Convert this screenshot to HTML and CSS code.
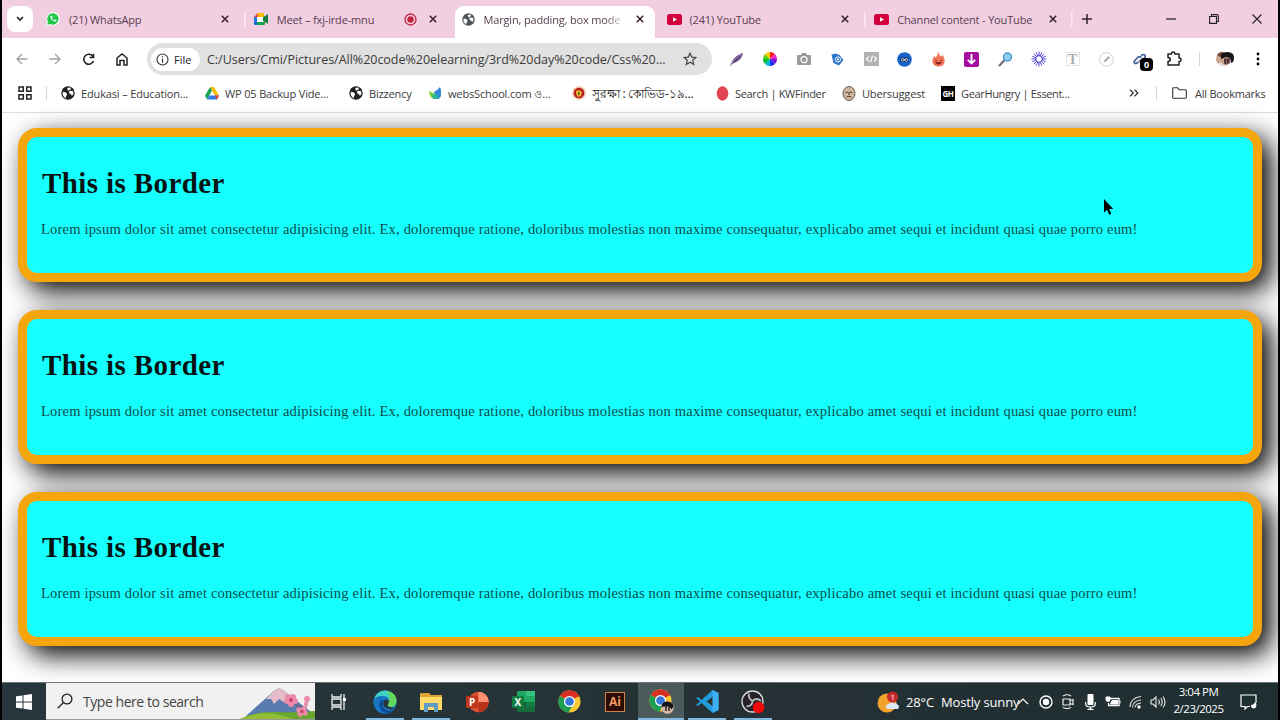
FILE: index.html
```
<!DOCTYPE html>
<html lang="en">
<head>
  <meta charset="UTF-8">
  <title>Margin, padding, box model</title>
  <link rel="stylesheet" href="styles.css">
</head>
<body>

<!-- Shared icons -->
<svg class="defs" width="0" height="0">
  <symbol id="close" viewBox="0 0 8 8"><path d="M.8 .8l6.400 6.400M7.200 .8L.8 7.200" stroke="#3a2433" stroke-width="1.600"/></symbol>
  <symbol id="globe" viewBox="0 0 14 14"><circle cx="7" cy="7" r="6.700" fill="currentColor"/><path d="M1.800 5.800q3 0 4 1.700t-.8 2.500l-.3 2.200Q1 10.500 1.800 5.800zM6 2.800q2-2 4-.8l-1 2-2 .5zM8 5.500q2-1.500 4.300 0 .7 3-1.300 4.500-.5-2-2-2.300-1.500-.7-1-2.200z" fill="#fff"/></symbol>
  <symbol id="youtube" viewBox="0 0 15 11"><rect width="15" height="11" rx="2.500" fill="#d2003c"/><path d="M6 3.200v4.600l4-2.300z" fill="#fff"/></symbol>
  <symbol id="chrome" viewBox="0 0 24 24"><circle cx="12" cy="12" r="11.500" fill="#fcc934"/><path d="M12 12L2 6.200A11.500 11.500 0 0 1 22 6.300z" fill="#d93025"/><path d="M12 6.300h10" stroke="#d93025" stroke-width="1"/><path d="M2 6.200A11.500 11.500 0 0 0 11 23.500l5.500-9.300L12 12z" fill="#1e9e50"/><circle cx="12" cy="12" r="5.800" fill="#fff"/><circle cx="12" cy="12" r="4.500" fill="#3577dc"/></symbol>
</svg>

<div class="browser">
  <div class="tabs">
    <div class="tab-search"><svg width="8" height="6" viewBox="0 0 8 6"><path d="M1 1l3 3 3-3" fill="none" stroke="#222" stroke-width="1.700"/></svg></div>
    <div class="tab">
      <span class="fav"><svg width="14" height="14" viewBox="0 0 14 14"><path d="M0 14l1-4A6.800 6.800 0 1 1 4 13z" fill="#fff"/><path d="M1.200 12.800l.8-3A5.700 5.700 0 1 1 4.300 12z" fill="#22c64a"/><path d="M4.500 4c-.8 2.200 2.700 5.800 5.200 5.500.9-.1 1-1 .8-1.400L9 7.400l-.9.800C7.200 7.900 6.300 7 6 6.200l.6-.8L6 3.800c-.5-.3-1.100-.2-1.500.2z" fill="#fff"/></svg></span>
      <span class="tab-title t1">(21) WhatsApp</span>
      <svg class="x" width="8" height="8"><use href="#close"/></svg>
    </div>
    <div class="tab line">
      <span class="fav"><svg width="14" height="12" viewBox="0 0 14 12"><path d="M0 4l4-4v4z" fill="#e94335"/><path d="M4 0h6v4H4z" fill="#fbbc04"/><path d="M0 4h3v5H0z" fill="#2675e8"/><path d="M0 9h3v3H1.500Q0 12 0 10.500z" fill="#1967d2"/><path d="M3 9h8v2q0 1-1 1H3z" fill="#18a44c"/><path d="M3 4h6v5H3z" fill="#fff"/><path d="M9 4l2-1 3-2v10l-3-2-2-1z" fill="#13803b"/></svg></span>
      <span class="tab-title t2">Meet – fxj-irde-mnu</span>
      <svg class="rec" width="13" height="13" viewBox="0 0 13 13"><circle cx="6.500" cy="6.500" r="5.500" fill="none" stroke="#c0223f" stroke-width="1.300"/><circle cx="6.500" cy="6.500" r="3.200" fill="#c0223f"/></svg>
      <svg class="x" width="8" height="8"><use href="#close"/></svg>
    </div>
    <div class="tab active">
      <span class="fav globe"><svg width="13" height="13"><use href="#globe"/></svg></span>
      <span class="tab-title t3">Margin, padding, box mode</span>
      <svg class="x" width="8" height="8"><use href="#close"/></svg>
    </div>
    <div class="tab">
      <span class="fav"><svg width="15" height="11"><use href="#youtube"/></svg></span>
      <span class="tab-title t4">(241) YouTube</span>
      <svg class="x" width="8" height="8"><use href="#close"/></svg>
    </div>
    <div class="tab line">
      <span class="fav"><svg width="15" height="11"><use href="#youtube"/></svg></span>
      <span class="tab-title t5">Channel content - YouTube</span>
      <svg class="x" width="8" height="8"><use href="#close"/></svg>
    </div>
    <div class="new-tab line"><svg width="10" height="10" viewBox="0 0 10 10"><path d="M5 0v10M0 5h10" stroke="#33202d" stroke-width="1.500"/></svg></div>
    <div class="win-buttons">
      <span><svg width="10" height="10" viewBox="0 0 10 10"><path d="M0 5h10" stroke="#222" stroke-width="1.200"/></svg></span>
      <span><svg width="10" height="10" viewBox="0 0 10 10"><path d="M.6 2.500h6.900v6.900H.6zM2.500 2.500V.6h5q1.900 0 1.900 1.900v5H7.500" fill="none" stroke="#222" stroke-width="1.100"/></svg></span>
      <span><svg width="10" height="10" viewBox="0 0 10 10"><path d="M.5 .5l9 9M9.500 .5l-9 9" stroke="#222" stroke-width="1.100"/></svg></span>
    </div>
  </div>

  <div class="toolbar">
    <div class="nav">
      <span><svg width="12" height="12" viewBox="0 0 12 12"><path d="M11.500 6H1.200M6 1L1 6l5 5" fill="none" stroke="#a3a3a3" stroke-width="1.300"/></svg></span>
      <span><svg width="12" height="12" viewBox="0 0 12 12"><path d="M.5 6h10.300M6 1l5 5-5 5" fill="none" stroke="#a3a3a3" stroke-width="1.300"/></svg></span>
      <span><svg width="13" height="13" viewBox="0 0 13 13"><path d="M11 3.500A5 5 0 1 0 11.500 8M11.500 .8v3.700H7.600" fill="none" stroke="#222" stroke-width="1.600"/></svg></span>
      <span><svg width="12" height="13" viewBox="0 0 12 13"><path d="M1 12V5l5-4 5 4v7H8V7.500H4V12z" fill="none" stroke="#222" stroke-width="1.500"/></svg></span>
    </div>
    <div class="address">
      <div class="chip">
        <svg width="13" height="13" viewBox="0 0 13 13"><circle cx="6.500" cy="6.500" r="5.500" fill="none" stroke="#333" stroke-width="1.100"/><path d="M6.500 5.800v4M6.500 3.200v1.300" stroke="#333" stroke-width="1.200"/></svg>
        <span>File</span>
      </div>
      <span class="url">C:/Users/Cmi/Pictures/All%20code%20elearning/3rd%20day%20code/Css%20...</span>
      <svg class="star" width="14" height="14" viewBox="0 0 14 14"><path d="M7 1.200l1.700 3.900 4.200.4-3.200 2.800 1 4.200L7 10.300l-3.700 2.200 1-4.200L1.100 5.500l4.200-.4z" fill="none" stroke="#444" stroke-width="1.200"/></svg>
    </div>
    <div class="extensions">
      <span><svg width="15" height="15" viewBox="0 0 15 15"><path d="M1 14.500C3 8 7 3 14 .8 13.500 6 9 10.500 3.500 11.500z" fill="#745595"/><path d="M2 13.500C5 8.500 8.500 5 13 1.500" stroke="#c3addb" stroke-width=".7"/></svg></span>
      <span><svg width="14" height="14" viewBox="0 0 14 14"><path d="M7 7V0a7 7 0 0 1 5 2z" fill="#ff1d1d"/><path d="M7 7l5-5a7 7 0 0 1 2 5z" fill="#ef21cf"/><path d="M7 7h7a7 7 0 0 1-2 5z" fill="#7a12e4"/><path d="M7 7l5 5a7 7 0 0 1-5 2z" fill="#1735e8"/><path d="M7 7v7a7 7 0 0 1-5-2z" fill="#00b6df"/><path d="M7 7l-5 5a7 7 0 0 1-2-5z" fill="#03b937"/><path d="M7 7H0a7 7 0 0 1 2-5z" fill="#5ad010"/><path d="M7 7L2 2a7 7 0 0 1 5-2z" fill="#fbc800"/></svg></span>
      <span><svg width="14" height="12" viewBox="0 0 14 12"><path d="M1 2h3l1-2h4l1 2h3q1 0 1 1v8q0 1-1 1H1q-1 0-1-1V3q0-1 1-1z" fill="#999"/><circle cx="7" cy="6.700" r="3" fill="#999" stroke="#fff" stroke-width="1.300"/></svg></span>
      <span><svg width="13" height="13" viewBox="0 0 13 13"><path d="M.5 1.500l4-1 4 1.500 4 5-4.500 5.500-5.500-2.500z" fill="#2e76c9"/><circle cx="7" cy="6.500" r="2.600" fill="none" stroke="#fff"/><circle cx="7" cy="6.500" r="1" fill="#fff"/></svg></span>
      <span><svg width="15" height="14" viewBox="0 0 15 14"><path d="M0 0h15v14H0z" fill="#b2b2b2"/><path d="M5 4.500L2.500 7 5 9.500M10 4.500L12.500 7 10 9.500M8.500 3.500l-2 7" fill="none" stroke="#fff" stroke-width="1.200"/></svg></span>
      <span><svg width="15" height="15" viewBox="0 0 15 15"><circle cx="7.500" cy="7.500" r="7.300" fill="#1764c8"/><path d="M3.500 5.500h8v4.500h-8z" fill="#0e2658"/><path d="M7.500 8c-1-2-3-2-3-.2s2 1.800 3 .2 3-2 3-.2-2 1.800-3-.2z" fill="none" stroke="#fff" stroke-width=".9"/></svg></span>
      <span><svg width="13" height="15" viewBox="0 0 13 15"><path d="M6 0c2 2 1.500 3.500 3 4.500L10.500 3c2 3 2.500 5 2 7.500C12 13 9.500 14.500 6.500 14.500S.8 12.500.5 10 1 5.500 2.500 4l1 1.500C5.500 4 6 2 6 0z" fill="#f27458"/><path d="M3 8.500h2M8 8.500h2M3.500 10.500q3 3.500 6 0z" stroke="#8c2a20" fill="#8c2a20"/></svg></span>
      <span><svg width="15" height="15" viewBox="0 0 15 15"><rect width="15" height="15" rx="2" fill="#a40ca2"/><path d="M7.500 2v9M3.800 7.800l3.700 3.700 3.700-3.700" fill="none" stroke="#fff" stroke-width="1.900"/></svg></span>
      <span><svg width="15" height="15" viewBox="0 0 15 15"><path d="M1 14l5.500-6" stroke="#746d73" stroke-width="2.200"/><circle cx="9.500" cy="5" r="4" fill="#8ed0f0" stroke="#4795c8" stroke-width="1.400"/></svg></span>
      <span><svg width="16" height="16" viewBox="-8 -8 16 16"><circle r="3.300" fill="none" stroke="#594bdc" stroke-width="1.300"/><path d="M0-3.500v-4M0 3.500v4M-3.500 0h-4M3.500 0h4M2.500-2.500l2.700-2.700M-2.500-2.500l-2.700-2.700M2.500 2.500l2.700 2.700M-2.500 2.500l-2.700 2.700M1.300-3.200l1.500-3.500M-1.300-3.200l-1.500-3.500M1.300 3.200l1.500 3.500M-1.300 3.200l-1.500 3.500M3.200-1.300l3.500-1.500M-3.200-1.300l-3.500-1.500M3.200 1.300l3.500 1.500M-3.200 1.300l-3.500 1.500" stroke="#594bdc"/></svg></span>
      <span><b class="ext-t">T</b></span>
      <span><svg width="15" height="15" viewBox="0 0 15 15"><circle cx="7.500" cy="7.500" r="6.800" fill="none" stroke="#ccc"/><path d="M4.500 10.500l1-2.500 4-4 1.500 1.500-4 4z" fill="#aaa"/></svg></span>
      <span class="ext-link"><svg width="14" height="13" viewBox="0 0 14 13"><path d="M5.500 9L3.700 10.300Q1 11 1 8.500L5 4.200Q7 3 8.300 4.800M6 7.500q1.500 1.800 3 0l3-3Q13 1.500 10 1.500L8 2.500" fill="none" stroke="#42639a" stroke-width="1.700"/></svg><b class="badge">0</b></span>
      <span><svg width="16" height="16" viewBox="0 0 16 16"><path d="M2 3h3.500q0-2 1.700-2t1.700 2H13v4q2 0 2 1.700t-2 1.700V14H2v-3.500q2.300-.2 2.300-2T2 6.500z" fill="none" stroke="#222" stroke-width="1.500" stroke-linejoin="round"/></svg></span>
    </div>
    <i class="sep"></i>
    <svg class="avatar" width="18" height="16" viewBox="0 0 18 16"><circle cx="7" cy="8" r="7" fill="#c7a68d"/><path d="M1 4Q4-1 9 2l-1 3-4 1z" fill="#6d4a38"/><path d="M5 3Q12-1 17 3q2 4 0 8l-2 1-1-5-4-1-5 2z" fill="#17151a"/><path d="M8 7h6v5q-3 3-5 1z" fill="#8c5b54"/><path d="M9 8v5M12 8v4" stroke="#201c28" stroke-width="1.300"/><path d="M2 12q4-2 6 3-4 1-6-3z" fill="#ece3dd"/></svg>
    <svg class="dots" width="4" height="14" viewBox="0 0 4 14"><circle cx="2" cy="2" r="1.400"/><circle cx="2" cy="7" r="1.400"/><circle cx="2" cy="12" r="1.400"/></svg>
  </div>

  <div class="bookmarks">
    <svg class="apps" width="14" height="14" viewBox="0 0 14 14"><path d="M1 1h4.300v4.300H1zM8.700 1H13v4.300H8.700zM1 8.700h4.300V13H1zM8.700 8.700H13V13H8.700z" fill="none" stroke="#222" stroke-width="1.500"/></svg>
    <i class="sep"></i>
    <div class="bm b1"><svg width="14" height="14"><use href="#globe"/></svg><span>Edukasi – Education...</span></div>
    <div class="bm b2"><svg width="14" height="13" viewBox="0 0 14 13"><path d="M5 0h4l5 8.500h-4z" fill="#fbbc04"/><path d="M5 0l2 3.500L2 12.500 0 8.800z" fill="#18a252"/><path d="M4.300 8.500H14L12 12.500H2z" fill="#3379e8"/><path d="M14 8.500l-2 4-2.300-4z" fill="#e84335"/></svg><span>WP 05 Backup Vide...</span></div>
    <div class="bm b3"><svg width="14" height="14"><use href="#globe"/></svg><span>Bizzency</span></div>
    <div class="bm b4"><svg width="13" height="13" viewBox="0 0 13 13"><path d="M0 4l4 2 3 1v4H3Q0 9 0 4z" fill="#7bd43c"/><path d="M5 5l3-2 3-3 1 3v6q-1 3-5 3z" fill="#3189dc"/><path d="M3 8l5-1 2 5-6 0z" fill="#29b79c"/></svg><span>websSchool.com ও...</span></div>
    <div class="bm b5"><svg width="14" height="14" viewBox="0 0 14 14"><circle cx="7" cy="7" r="6.800" fill="#f3c4a6"/><circle cx="7" cy="7" r="5.300" fill="#b51f1d"/><path d="M4 5l3-1 3 2-1 4-3 1-2-3z" fill="#f0b529"/><path d="M6 5l2 3-2 1z" fill="#315a29"/></svg><span>সুরক্ষা : কোভিড-১৯...</span></div>
    <div class="bm b6"><svg width="13" height="15" viewBox="0 0 13 15"><ellipse cx="6.500" cy="7.500" rx="5.800" ry="7.200" fill="#e24454"/></svg><span>Search | KWFinder</span></div>
    <div class="bm b7"><svg width="14" height="15" viewBox="0 0 14 15"><ellipse cx="7" cy="7.500" rx="6" ry="7" fill="#d3b8a1" stroke="#54483f" stroke-width=".9"/><path d="M3.500 6.300h2.700M7.800 6.300h2.700M7 6v3M4.500 11q2.500-1.500 5 0" fill="none" stroke="#4c3629"/></svg><span>Ubersuggest</span></div>
    <div class="bm b8"><b class="gh">GH</b><span>GearHungry | Essent...</span></div>
    <svg class="more" width="10" height="8" viewBox="0 0 10 8"><path d="M1 .7L4.300 4 1 7.300M5.500 .7L8.800 4 5.500 7.300" fill="none" stroke="#222" stroke-width="1.200"/></svg>
    <i class="sep"></i>
    <svg class="folder" width="15" height="12" viewBox="0 0 15 12"><path d="M.7 1.500Q.7.700 1.500.700h4l1.700 2h6.300q.8 0 .8.800v7q0 .8-.8.800h-12q-.8 0-.8-.8z" fill="none" stroke="#333" stroke-width="1.100"/></svg>
    <span class="all">All Bookmarks</span>
  </div>

  <div class="page">
    <div class="box">
      <h1>This is Border</h1>
      <p>Lorem ipsum dolor sit amet consectetur adipisicing elit. Ex, doloremque ratione, doloribus molestias non maxime consequatur, explicabo amet sequi et incidunt quasi quae porro eum!</p>
    </div>
    <div class="box">
      <h1>This is Border</h1>
      <p>Lorem ipsum dolor sit amet consectetur adipisicing elit. Ex, doloremque ratione, doloribus molestias non maxime consequatur, explicabo amet sequi et incidunt quasi quae porro eum!</p>
    </div>
    <div class="box">
      <h1>This is Border</h1>
      <p>Lorem ipsum dolor sit amet consectetur adipisicing elit. Ex, doloremque ratione, doloribus molestias non maxime consequatur, explicabo amet sequi et incidunt quasi quae porro eum!</p>
    </div>
  </div>

  <div class="taskbar">
    <div class="start"><svg width="16" height="16" viewBox="0 0 16 16"><path d="M0 2.300l6.500-.9v6.100H0zM7.500 1.200L16 0v7.500H7.500zM0 8.500h6.500v6.100L0 13.700zM7.500 8.500H16V16l-8.500-1.200z" fill="#fff"/></svg></div>
    <div class="search">
      <svg width="16" height="16" viewBox="0 0 16 16"><circle cx="10" cy="6" r="4.900" fill="none" stroke="#222" stroke-width="1.300"/><path d="M6.500 9.500L.7 15.300" stroke="#222" stroke-width="1.300"/></svg>
      <span>Type here to search</span>
      <svg class="hill" width="75" height="36" viewBox="0 0 75 36"><path d="M6 33L35 7q4-3 8 0l32 25v4H6z" fill="#587bb0"/><path d="M26 16L35 7q4-3 8 0l12 10-6-1-4 4-6-4-5 5-3-5z" fill="#e6bccb"/><path d="M0 36q16-8 36-7t39-1v8z" fill="#69a62f"/><path d="M0 36q20-9 40-4l14 4z" fill="#92bd35"/><path d="M46 14l12 9 8 2 2-11" fill="none" stroke="#80515c"/><g fill="#ec8aaa"><circle cx="48" cy="14" r="3"/><circle cx="53" cy="14" r="3"/><circle cx="55" cy="18" r="3"/><circle cx="51" cy="21" r="3"/><circle cx="47" cy="18" r="3"/><circle cx="59" cy="27" r="2.700"/><circle cx="64" cy="26" r="2.700"/><circle cx="65" cy="30" r="2.700"/><circle cx="60" cy="31" r="2.700"/><circle cx="67" cy="16" r="3"/><circle cx="66" cy="21" r="2.200"/></g><circle cx="51" cy="17" r="1.700" fill="#cb315e"/><circle cx="62" cy="28.500" r="1.500" fill="#cb315e"/></svg>
    </div>
    <div class="apps-row">
      <span class="app"><svg width="16" height="16" viewBox="0 0 16 16"><path d="M1 0v3h9V0M1 16v-3h9v3M1 5h9v6H1zM13 0v16" fill="none" stroke="#eee" stroke-width="1.300"/><path d="M12 4h3v3h-3z" fill="#fff"/></svg></span>
      <span class="app open"><svg width="24" height="24" viewBox="0 0 24 24"><circle cx="12" cy="12" r="11.500" fill="#1687cf"/><path d="M1 9Q5-1 14 .7 24 3 23.500 12q-1 5-7 5-3-1-1-4 2-7-6-7Q4 6 1 9z" fill="#41cfc0"/><path d="M14 .7Q24 3 23.500 12q-1 5-7 5-3-1-1-4Q18 6 14 .7z" fill="#63d65c"/><path d="M.5 12q2-6 8-6 6 .5 7 5-3-2-5 0-3 4 0 7 5 5 11 1-4 5-10 4.500Q1 22 .5 12z" fill="#1974c4"/><path d="M8 10q-4 6 1 11 3 3 7 2 4-2 6-4-6 4-11-1-3-4-.5-7.500z" fill="#0e4c98"/><path d="M16.500 17q-3-1-1-4 .5-2 0-3-2-1-4 0-3 4 0 7 5 4 10 1.500-1-1-5-1.500z" fill="#27343a"/></svg></span>
      <span class="app open"><svg width="22" height="20" viewBox="0 0 22 20"><path d="M0 2q0-1 1-1h8l2 2h11v15H0z" fill="#dda631"/><path d="M0 5h22v13H0z" fill="#ffdc69"/><path d="M4 11h14v9h-4v-5H8v5H4z" fill="#5f9cc4"/></svg></span>
      <span class="app"><svg width="23" height="22" viewBox="0 0 23 22"><circle cx="12.500" cy="11" r="10.300" fill="#d85231"/><path d="M12.500.7a10.300 10.300 0 0 1 10.300 10.300H12.500z" fill="#ff9273"/><path d="M12.500 21.300A10.300 10.300 0 0 0 22.800 11H12.500z" fill="#b9321d"/><rect y="5" width="12" height="12" rx="1" fill="#bd381d"/><text class="office" x="3" y="15">P</text></svg></span>
      <span class="app"><svg width="23" height="21" viewBox="0 0 23 21"><rect x="5" width="18" height="21" rx="1" fill="#1fa660"/><path d="M14 0h9v5h-9z" fill="#36c481"/><path d="M5 11h9v5H5z" fill="#185c37"/><path d="M14 11h9v5h-9z" fill="#107c41"/><path d="M5 16h18v5H5z" fill="#186c3c"/><rect y="5" width="12" height="12" rx="1" fill="#107c41"/><text class="office" x="2.500" y="15">X</text></svg></span>
      <span class="app"><svg width="23" height="23"><use href="#chrome"/></svg></span>
      <span class="app"><b class="ai">Ai</b></span>
      <span class="app open current"><svg width="25" height="25" viewBox="0 0 25 25"><use href="#chrome" width="23" height="23"/><circle cx="18.500" cy="18.500" r="6.300" fill="#d5b6a5"/><path d="M12.500 18q0-5 5-5.500 6 0 7 5l-2 3-2-3h-5z" fill="#141217"/><path d="M17 17v5M20 17v5" stroke="#2a2024" stroke-width="1.500"/></svg></span>
      <span class="app open"><svg width="23" height="23" viewBox="0 0 23 23"><path d="M16.500 0L22.500 3v17l-6 3L5.500 13 2 16 0 15l4-3.500L0 8l2-1 3.500 3zM17 6.500l-6.500 5 6.500 5z" fill="#229bdc" fill-rule="evenodd"/><path d="M16.500 0l6 3v17l-6 3z" fill="#3daff0"/></svg></span>
      <span class="app open"><svg width="24" height="24" viewBox="0 0 24 24"><circle cx="11.500" cy="11.500" r="10.500" fill="#252127" stroke="#ddd" stroke-width="1.300"/><path d="M8 3.500q-1 5 3.500 7.500 4-4 8.500 0M11.500 11q0 5-6 5.500" fill="none" stroke="#bbb" stroke-width="1.800"/><circle cx="17.500" cy="17.500" r="5.800" fill="#f20a0a"/></svg></span>
    </div>
    <div class="weather">
      <svg width="23" height="22" viewBox="0 0 23 22"><circle cx="10" cy="12" r="9.500" fill="#f2a32e"/><path d="M9 16q0-3 3-3 2-3 5-1 3 0 4 2 2 1 0 4H11q-2 0-2-2z" fill="#d9e7f8"/><circle cx="15.500" cy="6" r="5.500" fill="#c42a2b"/><text class="alert" x="13.500" y="9">1</text></svg>
      <span class="temp">28°C</span><span class="sunny">Mostly sunny</span>
    </div>
    <div class="tray">
      <span><svg width="12" height="7" viewBox="0 0 12 7"><path d="M1 6l5-5 5 5" fill="none" stroke="#fff" stroke-width="1.200"/></svg></span>
      <span><svg width="14" height="14" viewBox="0 0 14 14"><circle cx="7" cy="7" r="6" fill="none" stroke="#fff" stroke-width="1.400"/><circle cx="7" cy="7" r="3.200" fill="#fff"/></svg></span>
      <span><svg width="12" height="15" viewBox="0 0 12 15"><path d="M1 5h7v6H1zM8 6.500l3-1v5l-3-1M1 2q4-2.500 8 0M1 13.500q4 2 8 0" fill="none" stroke="#eee" stroke-width="1.200"/></svg></span>
      <span><svg width="11" height="16" viewBox="0 0 11 16"><rect x="2.500" width="6" height="11" rx="1" fill="#fff"/><path d="M.7 8v2q0 3 4.800 3t4.800-3V8M5.500 13v2M2.500 15.300h6" fill="none" stroke="#fff" stroke-width="1.200"/></svg></span>
      <span><svg width="16" height="12" viewBox="0 0 16 12"><path d="M5 2.500h9v7H3.500V7" fill="none" stroke="#fff" stroke-width="1.300"/><path d="M7 4.500h5.500v3.500H5.500zM15 4.500v3M1 1v2.500q0 2 2 2t2-2V1z" fill="#fff" stroke="#fff"/></svg></span>
      <span><svg width="13" height="14" viewBox="0 0 13 14"><path d="M1 12Q1.500 2.500 12 1.500M3.500 12.500Q4 5.500 12 5M6 12.500Q6.500 8.500 12 8" fill="none" stroke="#ddd" stroke-width="1.100"/><circle cx="10" cy="12" r="1.700" fill="#fff"/></svg></span>
      <span><svg width="16" height="14" viewBox="0 0 16 14"><path d="M1 5h2l3-3v10L3 9H1zM8.500 4.500q1.700 2.500 0 5M10.800 3q2.700 4 0 8M13 1.500q4 5.500 0 11" fill="none" stroke="#eee" stroke-width="1.100"/></svg></span>
    </div>
    <div class="clock"><span class="time">3:04 PM</span><span class="date">2/23/2025</span></div>
    <div class="notify"><svg width="17" height="16" viewBox="0 0 17 16"><path d="M10 12.500H7.500L5 15v-2.500H1V1h15v8" fill="none" stroke="#fff" stroke-width="1.200"/><path d="M15 8q-1 3-4 3 0 3.500 3 3.500 3.500-1 2-5z" fill="#fff"/></svg></div>
  </div>

  <svg class="cursor" width="11" height="18" viewBox="0 0 11 18"><path d="M1 1v13.500l3-2.800 2.300 5 2-.9-2.200-4.700h4.200z" fill="#000"/></svg>
</div>

</body>
</html>
```
FILE: styles.css
```
* {
  box-sizing: border-box;
}
body {
  margin: 0;
  background: #000;
  overflow: hidden;
}
.defs {
  position: absolute;
}
svg {
  flex-shrink: 0;
}
.browser {
  position: relative;
  display: flex;
  flex-direction: column;
  width: 1276px;
  height: 720px;
  margin-left: 2px;
  background: #fff;
  font-family: "Open Sans", sans-serif;
  font-size: 11px;
  color: #3b3b3b;
  white-space: nowrap;
  overflow: hidden;
}

/* tabs */
.tabs {
  display: flex;
  height: 38px;
  padding-left: 5px;
  background: #f2cee1;
}
.tab-search {
  display: flex;
  align-items: center;
  justify-content: center;
  width: 26px;
  height: 26px;
  margin: 6px 4px 0 0;
  border-radius: 8px;
  background: #fff;
}
.tab {
  display: flex;
  align-items: center;
  width: 206.800px;
  padding: 0 15px 0 9px;
  color: #583f50;
}
.fav {
  display: flex;
  width: 23px;
}
.globe {
  color: #50545a;
}
.tab-title {
  flex: 1;
  letter-spacing: -.16px;
}
.rec {
  margin-right: 12px;
}
.line {
  padding-left: 10px;
  padding-right: 14px;
  background: linear-gradient(#fbeaf3, #fbeaf3) 0 12px / 1.500px 15px no-repeat;
}
.active {
  width: 200px;
  height: 32px;
  margin: 6px 3px 0 4px;
  padding: 0 11px 6px 7px;
  border-radius: 9px 9px 0 0;
  background: #fff;
}
.active .fav {
  width: 22px;
}
.active .tab-title {
  -webkit-mask-image: linear-gradient(90deg, #000 122px, transparent 142px);
}
.new-tab {
  display: flex;
  align-items: center;
  width: 78px;
  padding-left: 11px;
}
.win-buttons {
  display: flex;
}
.win-buttons span {
  display: flex;
  align-items: center;
  justify-content: center;
  width: 43px;
}

/* toolbar */
.toolbar {
  display: flex;
  align-items: center;
  height: 42px;
  padding-left: 3px;
}
.nav {
  display: flex;
  width: 142px;
}
.nav span {
  display: flex;
  align-items: center;
  justify-content: center;
  width: 33.500px;
}
.address {
  display: flex;
  align-items: center;
  width: 565px;
  height: 32px;
  padding: 0 15px 0 4px;
  border-radius: 16px;
  background: #e1e1e1;
}
.chip {
  display: flex;
  align-items: center;
  gap: 5px;
  width: 49px;
  height: 23px;
  padding-left: 5px;
  border-radius: 12px;
  background: #fff;
  color: #222;
}
.url {
  flex: 1;
  margin-left: 7px;
  font-size: 12.500px;
  letter-spacing: -.02px;
}
.extensions {
  display: flex;
  margin-left: 8px;
}
.extensions > span {
  display: flex;
  align-items: center;
  justify-content: center;
  width: 33.600px;
}
.ext-t {
  width: 14px;
  height: 14px;
  border: 1px solid #e2e2e2;
  font: bold 14px/13px "Liberation Serif", serif;
  text-align: center;
  color: #aaa;
}
.ext-link {
  position: relative;
}
.badge {
  position: absolute;
  left: 17px;
  top: 7px;
  width: 13px;
  height: 13px;
  border-radius: 4px;
  background: #000;
  color: #fff;
  font-size: 9px;
  line-height: 13px;
  text-align: center;
}
.sep {
  width: 1px;
  height: 14px;
  background: #d4d4d4;
}
.toolbar .sep {
  margin-left: 9px;
}
.avatar {
  margin-left: 16px;
}
.dots {
  margin-left: 22px;
}

/* bookmarks */
.bookmarks {
  display: flex;
  align-items: center;
  height: 33px;
  padding: 0 0 6px 16px;
  border-bottom: 1px solid #dedee2;
}
.bookmarks .sep {
  margin: 0 14px;
}
.bm {
  display: flex;
  align-items: center;
  gap: 6px;
  letter-spacing: -.15px;
}
.bm span {
  height: 15px;
  line-height: 15px;
}
.b1 { width: 144px; }
.b2 { width: 144px; }
.b3 { width: 80px; }
.b4 { width: 143px; }
.b5 {
  width: 144px;
  color: #111;
  font-size: 12px;
}
.b6 {
  width: 126px;
  letter-spacing: -.32px;
}
.b7 { width: 99px; }
.b8 {
  width: 188px;
  letter-spacing: -.34px;
}
.bm svg {
  color: #222;
}
.gh {
  width: 14px;
  height: 15px;
  background: #000;
  color: #fff;
  font-size: 8px;
  line-height: 15px;
  text-align: center;
}
.bookmarks .more + .sep {
  margin: 0 15px 0 17px;
}
.folder {
  margin-right: 8px;
}
.all {
  letter-spacing: -.22px;
}

/* content */
.page {
  flex: 1;
  padding: 14.500px 16px 0;
  font-family: "Liberation Serif", serif;
  color: #071313;
}
.box {
  height: 154px;
  margin-bottom: 28px;
  padding: 15px 14px;
  border: 9px solid #f4a60c;
  border-radius: 19px;
  background: #15ffff;
  box-shadow: 9px 9px 27px #000;
}
.box h1 {
  margin: 14px 0 0 1px;
  font-size: 29px;
  line-height: 34px;
  letter-spacing: .4px;
}
.box p {
  margin: 20.500px 0 0;
  font-size: 14.500px;
  line-height: 18px;
  letter-spacing: .195px;
  color: #0c4d4d;
}

/* taskbar */
.taskbar {
  position: relative;
  display: flex;
  align-items: center;
  height: 38px;
  background: linear-gradient(90deg, #27363c, #253134 60%, #1f2e31);
  border-top: 1px solid #66777a;
  color: #fff;
}
.start {
  display: flex;
  justify-content: center;
  width: 44px;
}
.search {
  display: flex;
  align-items: center;
  width: 269px;
  height: 37px;
  padding-left: 11px;
  border-bottom: 1px solid #999;
  background: #f1f1f1;
  color: #444;
  font-size: 14px;
}
.search span {
  flex: 1;
  margin-left: 10px;
  letter-spacing: -.45px;
}
.hill {
  align-self: flex-end;
}
.apps-row {
  display: flex;
  width: 561px;
  height: 37px;
  padding-left: 1px;
}
.app {
  display: flex;
  align-items: center;
  justify-content: center;
  width: 46px;
}
.open {
  background: linear-gradient(#82b8dd, #82b8dd) center bottom / 38px 2px no-repeat;
}
.current {
  background: linear-gradient(#82b8dd, #82b8dd) center bottom / 100% 2px no-repeat, #4d5a5c;
}
.office {
  font: bold 10px "Open Sans", sans-serif;
  fill: #fff;
}
.ai {
  width: 20px;
  height: 20px;
  border: 1px solid #d88246;
  background: #2b0d05;
  color: #f39b60;
  font-size: 12px;
  line-height: 17px;
  text-align: center;
}
.weather {
  display: flex;
  align-items: center;
  width: 136px;
  padding-left: 1px;
  font-size: 13px;
  letter-spacing: -.15px;
}
.alert {
  font-size: 8px;
  fill: #fff;
}
.temp {
  flex-shrink: 0;
  width: 35px;
  margin-left: 6px;
}
.tray {
  display: flex;
  height: 37px;
}
.tray span {
  display: flex;
  align-items: center;
  justify-content: center;
  width: 22.500px;
}
.clock {
  display: flex;
  flex-direction: column;
  align-items: center;
  width: 54px;
  margin: 0 0 3px 2px;
  font-size: 11.500px;
  line-height: 17px;
  letter-spacing: -.5px;
}
.notify {
  display: flex;
  margin-left: 14px;
}

/* mouse pointer over the page */
.cursor {
  position: absolute;
  left: 1101px;
  top: 198px;
}
```
